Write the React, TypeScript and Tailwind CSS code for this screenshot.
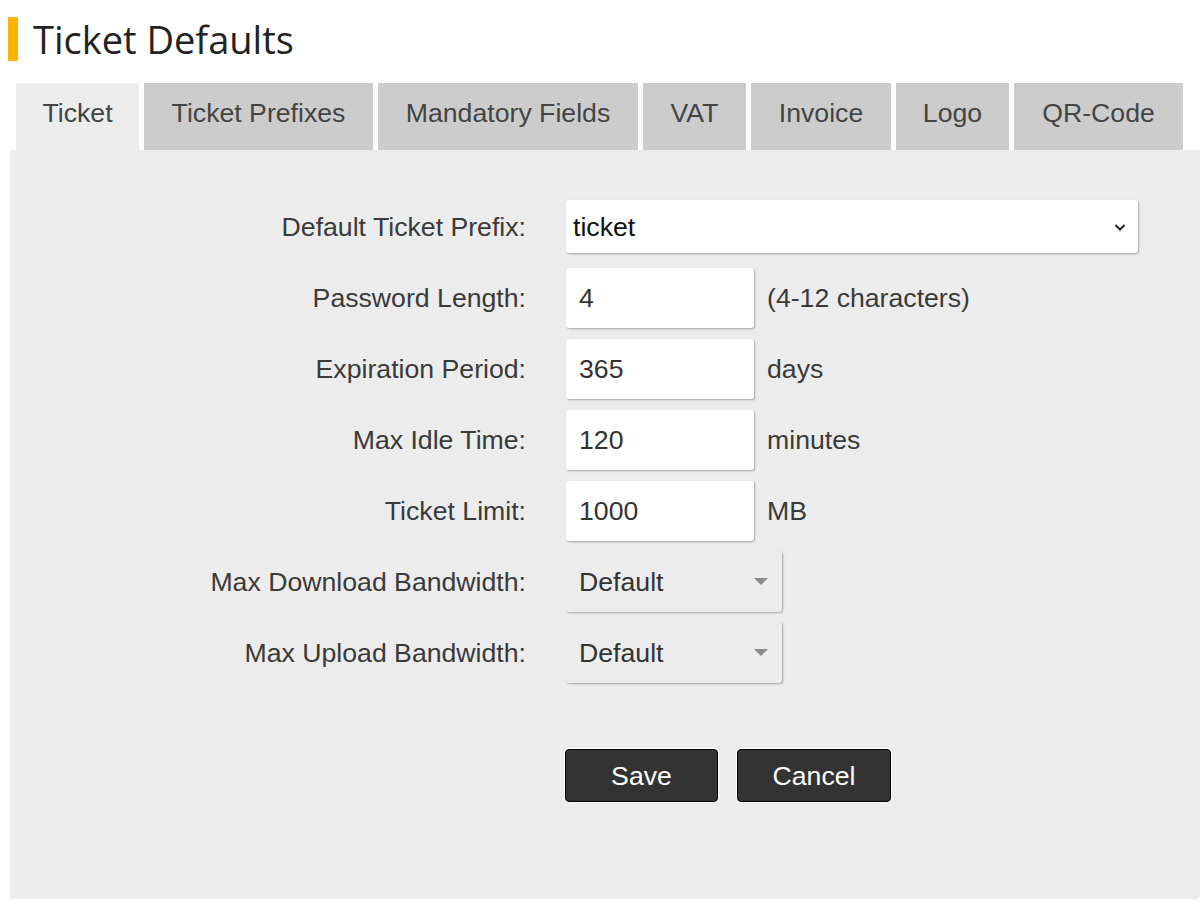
import React from "react";

const tabs = [
  { label: "Ticket", cls: "w-[123px] bg-[#ececec]" },
  { label: "Ticket Prefixes", cls: "w-[229px] bg-[#cccccc]" },
  { label: "Mandatory Fields", cls: "w-[260px] bg-[#cccccc]" },
  { label: "VAT", cls: "w-[103px] bg-[#cccccc]" },
  { label: "Invoice", cls: "w-[140px] bg-[#cccccc]" },
  { label: "Logo", cls: "w-[113px] bg-[#cccccc]" },
  { label: "QR-Code", cls: "w-[169px] bg-[#cccccc]" },
];

function Chevron() {
  return (
    <svg width="14" height="10" viewBox="0 0 14 10" className="block">
      <path d="M2.5 3 L7 7.5 L11.5 3" fill="none" stroke="#222" strokeWidth="2" />
    </svg>
  );
}

function Triangle() {
  return (
    <svg width="16" height="8" viewBox="0 0 16 8" className="block">
      <path d="M1 0 L15 0 L8 7 Z" fill="#8a8a8a" />
    </svg>
  );
}

function Row({ label, children }: { label: string; children: React.ReactNode }) {
  return (
    <div className="flex items-center h-[71px]">
      <div className="w-[516px] text-right text-[#3a3a3a]">{label}</div>
      <div className="ml-[40px] flex items-center">{children}</div>
    </div>
  );
}

function TextInput({ value, suffix }: { value: string; suffix: string }) {
  return (
    <>
      <div className="w-[188px] h-[60px] bg-white rounded-[3px] shadow-[1px_1px_2px_rgba(0,0,0,0.3)] flex items-center pl-[13px] text-[#333]">
        {value}
      </div>
      <span className="ml-[13px] text-[#3a3a3a]">{suffix}</span>
    </>
  );
}

function DropDown() {
  return (
    <div className="w-[216px] h-[61px] bg-[#ececec] rounded-[3px] shadow-[1px_1px_2px_rgba(0,0,0,0.3)] flex items-center justify-between pl-[13px] pr-[13px] text-[#333]">
      <span>Default</span>
      <Triangle />
    </div>
  );
}

export default function App() {
  return (
    <div
      className="w-[1200px] h-[912px] bg-white overflow-hidden"
      style={{ fontFamily: '"Liberation Sans", Arial, sans-serif' }}
    >
      <div className="flex items-center pt-[17px] pl-[8px]">
        <div className="w-[10px] h-[44px] bg-[#ffb400] rounded-[1px]" />
        <h1
          className="ml-[15px] text-[38px] leading-[44px] text-[#222]"
          style={{ fontFamily: '"Open Sans", "Noto Sans", sans-serif' }}
        >
          Ticket Defaults
        </h1>
      </div>

      <div className="flex gap-[5px] pl-[16px] mt-[22px]">
        {tabs.map((t) => (
          <div
            key={t.label}
            className={`${t.cls} h-[67px] flex items-center justify-center pb-[7px] text-[26.67px] text-[#444]`}
          >
            {t.label}
          </div>
        ))}
      </div>

      <div className="ml-[10px] w-[1190px] h-[749px] bg-[#ececec] rounded-b-[4px] pt-[41px] text-[26.67px]">
        <Row label="Default Ticket Prefix:">
          <div className="w-[572px] h-[53px] bg-white rounded-[3px] shadow-[1px_1px_2px_rgba(0,0,0,0.3)] flex items-center justify-between pl-[7px] pr-[11px] text-[#111]">
            <span>ticket</span>
            <Chevron />
          </div>
        </Row>
        <Row label="Password Length:">
          <TextInput value="4" suffix="(4-12 characters)" />
        </Row>
        <Row label="Expiration Period:">
          <TextInput value="365" suffix="days" />
        </Row>
        <Row label="Max Idle Time:">
          <TextInput value="120" suffix="minutes" />
        </Row>
        <Row label="Ticket Limit:">
          <TextInput value="1000" suffix="MB" />
        </Row>
        <Row label="Max Download Bandwidth:">
          <DropDown />
        </Row>
        <Row label="Max Upload Bandwidth:">
          <DropDown />
        </Row>

        <div className="flex mt-[61px] ml-[555px] gap-[19px]">
          <button className="w-[153px] h-[53px] bg-[#333] text-white rounded-[4px] border border-black shadow-[0_0_0_1px_#fff] text-[26.67px]">
            Save
          </button>
          <button className="w-[154px] h-[53px] bg-[#333] text-white rounded-[4px] border border-black shadow-[0_0_0_1px_#fff] text-[26.67px]">
            Cancel
          </button>
        </div>
      </div>
    </div>
  );
}
